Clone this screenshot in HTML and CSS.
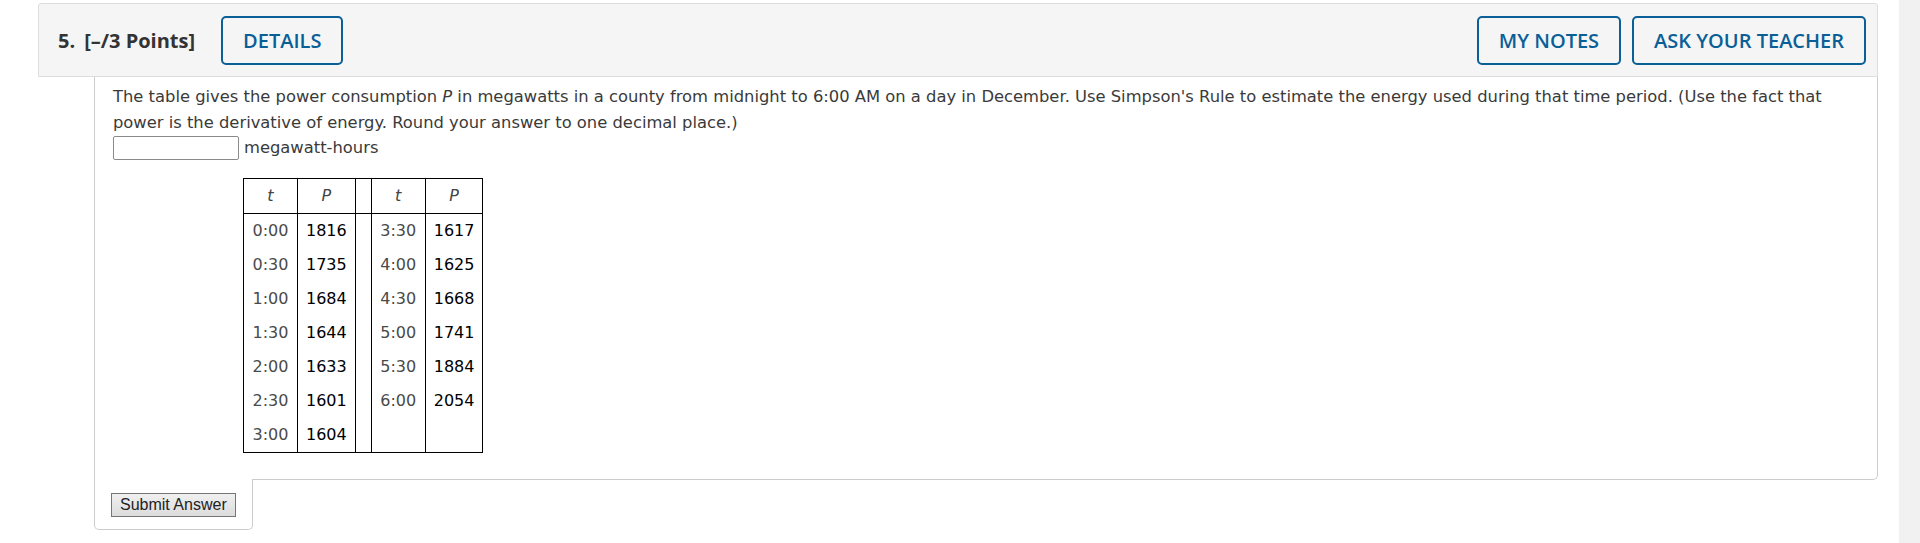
FILE: index.html
```html
<!DOCTYPE html>
<html lang="en">
<head>
<meta charset="utf-8">
<title>Question 5</title>
<link rel="stylesheet" href="styles.css">
</head>
<body>
<div class="page">
  <main class="main">
    <section class="question">
      <header class="q-head">
        <div class="q-title"><span class="q-num">5.</span><span class="q-pts">[–/3 Points]</span></div>
        <button class="btn-outline btn-details" type="button">DETAILS</button>
        <div class="q-actions">
          <button class="btn-outline" type="button">MY NOTES</button>
          <button class="btn-outline" type="button">ASK YOUR TEACHER</button>
        </div>
      </header>
      <div class="q-body">
        <p class="q-text">The table gives the power consumption <i>P</i> in megawatts in a county from midnight to 6:00 AM on a day in December. Use Simpson's Rule to estimate the energy used during that time period. (Use the fact that power is the derivative of energy. Round your answer to one decimal place.)</p>
        <div class="answer-row"><input class="answer" type="text" aria-label="answer"><span class="unit">megawatt-hours</span></div>
        <table class="data">
          <thead>
            <tr><th class="tc"><i>t</i></th><th><i>P</i></th><th class="gap"></th><th class="tc"><i>t</i></th><th><i>P</i></th></tr>
          </thead>
          <tbody>
            <tr><td class="tc">0:00</td><td>1816</td><td class="gap"></td><td class="tc">3:30</td><td>1617</td></tr>
            <tr><td class="tc">0:30</td><td>1735</td><td class="gap"></td><td class="tc">4:00</td><td>1625</td></tr>
            <tr><td class="tc">1:00</td><td>1684</td><td class="gap"></td><td class="tc">4:30</td><td>1668</td></tr>
            <tr><td class="tc">1:30</td><td>1644</td><td class="gap"></td><td class="tc">5:00</td><td>1741</td></tr>
            <tr><td class="tc">2:00</td><td>1633</td><td class="gap"></td><td class="tc">5:30</td><td>1884</td></tr>
            <tr><td class="tc">2:30</td><td>1601</td><td class="gap"></td><td class="tc">6:00</td><td>2054</td></tr>
            <tr><td class="tc">3:00</td><td>1604</td><td class="gap"></td><td class="tc"></td><td></td></tr>
          </tbody>
        </table>
      </div>
      <div class="q-foot"><button class="submit" type="button">Submit Answer</button></div>
    </section>
  </main>
  <div class="scroll-strip"></div>
</div>
</body>
</html>
```

FILE: styles.css
```css
html, body { margin: 0; padding: 0; background: #fff; }
.page { display: flex; min-height: 543px; }
.main { flex: 1; padding: 3px 21px 0 38px; min-width: 0; }
.scroll-strip { width: 21px; background: #f1f1f1; }

.q-head {
  display: flex; align-items: center;
  box-sizing: border-box; height: 74px;
  padding: 0 11px 0 19px;
  background: #f5f5f5; border: 1px solid #ddd; border-radius: 3px 3px 0 0;
}
.q-title { font: 700 20px "Open Sans", sans-serif; color: #333; white-space: nowrap; }
.q-num { margin-right: 9px; }
.btn-outline {
  font: 600 20px "Open Sans", sans-serif; color: #0a5f97;
  background: transparent; border: 2px solid #0a5f97; border-radius: 5px;
  height: 49px; padding: 0 20px; margin: 0; cursor: pointer;
}
.btn-details { margin-left: 26px; }
.q-actions { margin-left: auto; display: flex; gap: 11px; }

.q-body {
  margin-left: 56px;
  border: 1px solid #ccc; border-top: none; border-bottom-right-radius: 5px;
  padding: 7px 18px 26px;
  font: 16.35px "DejaVu Sans", sans-serif; color: #3a3a3a;
}
.q-text { margin: 0; line-height: 26px; }
.answer-row { display: flex; align-items: center; gap: 5px; }
.answer { box-sizing: border-box; width: 126px; height: 24px; border: 1px solid #8a8a8a; border-radius: 2px; margin: 0; padding: 0 4px; }
.unit { line-height: 24px; }

.data { margin: 18px 0 0 130px; border-collapse: collapse; border: 1px solid #000; font: 16px/18px "DejaVu Sans", sans-serif; }
.data th, .data td { border-left: 1px solid #000; border-right: 1px solid #000; padding: 8px; text-align: left; }
.data th { border-bottom: 1px solid #000; font-weight: normal; color: #444; text-align: center; }
.data td { color: #000; }
.data .tc { width: 37px; text-align: center; }
.data td.tc { color: #4a4a4a; }
.data .gap { width: 0; padding: 0 7.5px; }

.q-foot {
  margin-left: 56px; margin-top: -1px; width: 159px; box-sizing: border-box;
  background: #fff; border: 1px solid #ccc; border-top: none; border-radius: 0 0 5px 5px;
  padding: 14px 0 12px 16px;
}
.submit {
  font: 16px "Liberation Sans", Arial, sans-serif; color: #222;
  background: linear-gradient(#f0f0f0, #dcdcdc); border: 1px solid #767676; border-radius: 0;
  height: 24px; padding: 0 8px; margin: 0;
}
```
